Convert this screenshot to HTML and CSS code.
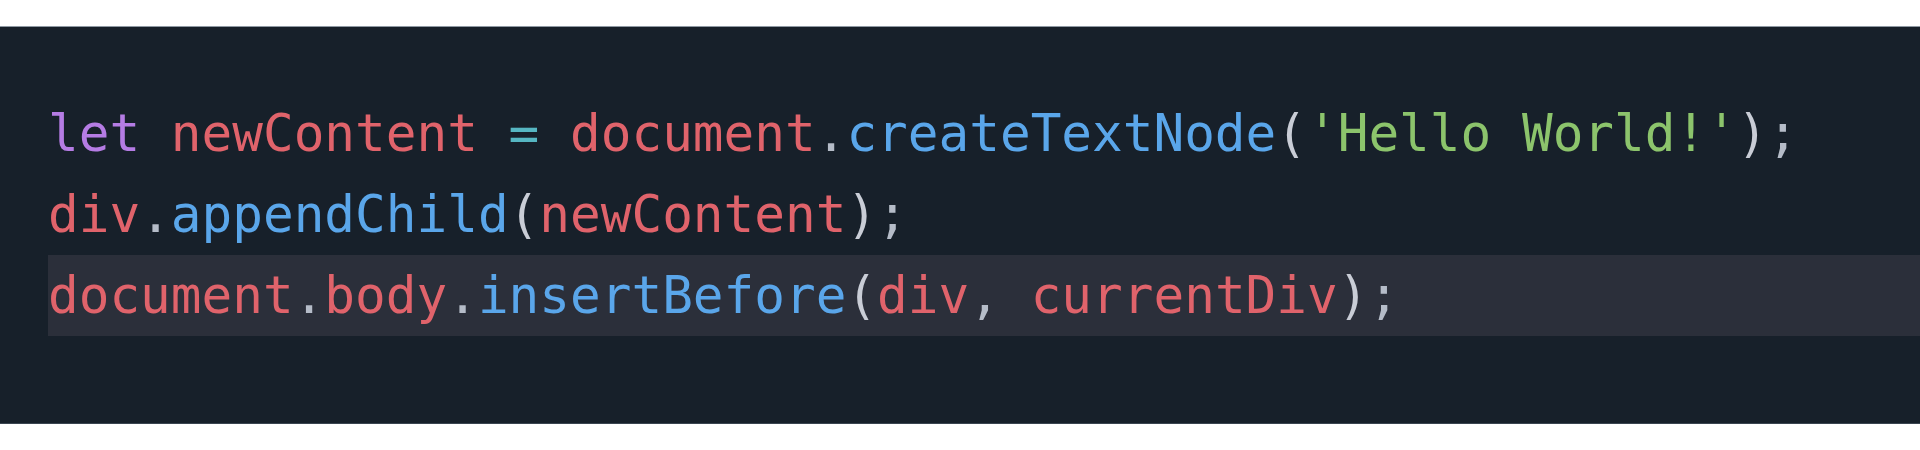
FILE: index.html
```html
<!DOCTYPE html>
<html lang="en">
<head>
<meta charset="utf-8">
<title>Code snippet</title>
<link rel="stylesheet" href="styles.css">
</head>
<body>
<pre class="code"><div class="line"><span class="kw">let</span> <span class="var">newContent</span> <span class="op">=</span> <span class="var">document</span><span class="pun">.</span><span class="fn">createTextNode</span><span class="par">(</span><span class="str">'Hello World!'</span><span class="par">)</span><span class="pun">;</span></div><div class="line"><span class="var">div</span><span class="pun">.</span><span class="fn">appendChild</span><span class="par">(</span><span class="var">newContent</span><span class="par">)</span><span class="pun">;</span></div><div class="line active"><span class="var">document</span><span class="pun">.</span><span class="var">body</span><span class="pun">.</span><span class="fn">insertBefore</span><span class="par">(</span><span class="var">div</span><span class="pun">,</span> <span class="var">currentDiv</span><span class="par">)</span><span class="pun">;</span></div></pre>
</body>
</html>
```

FILE: styles.css
```css
html, body {
  margin: 0;
  padding: 0;
  background: #ffffff;
}

body {
  padding-top: 26px;
}

.code {
  margin: 0;
  background: #17202a;
  border-top: 1px solid #8f99a3;
  border-bottom: 1px solid #3a4550;
  padding: 66px 0 86px 48px;
  height: 244px;
  font-family: "DejaVu Sans Mono", "Liberation Mono", monospace;
  font-size: 51px;
  line-height: 81px;
  color: #abb2bf;
  white-space: pre;
}

.line {
  height: 81px;
  padding-left: 0;
}

.line.active {
  background: #2b2f3a;
}

.kw { color: #b57ce4; }
.var { color: #e0636b; }
.op { color: #56b6c2; }
.fn { color: #5aa6ea; }
.str { color: #8cc46c; }
.pun { color: #b5bcc8; }
.par { color: #c9cdd6; }
```
